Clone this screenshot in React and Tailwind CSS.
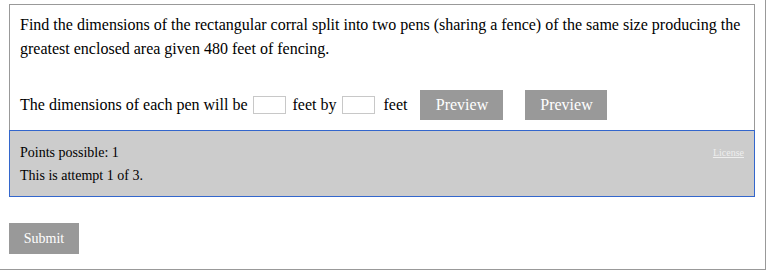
import React from "react";

const serif = { fontFamily: '"Liberation Serif", "Times New Roman", serif' };

const GrayButton = ({ children, className = "" }) => (
  <button
    className={`bg-[#999] text-white text-[16px] leading-none h-[30px] ${className}`}
  >
    {children}
  </button>
);

const AnswerBox = () => (
  <input
    type="text"
    className="w-[33px] h-[18px] border border-[#c8c8c8] bg-white outline-none"
  />
);

export default function App() {
  return (
    <div
      className="w-[766px] h-[270px] border-r border-b border-[#999] bg-white text-black"
      style={serif}
    >
      <div className="pt-[4px] pl-[9px] w-[755px]">
        {/* question */}
        <div className="border border-b-0 border-[#999] pt-[8px] pl-[10px] pr-[10px] pb-[10px]">
          <p className="text-[16px] leading-[24px]">
            Find the dimensions of the rectangular corral split into two pens
            (sharing a fence) of the same size producing the greatest enclosed
            area given 480 feet of fencing.
          </p>
          <div className="flex items-center mt-[29px] h-[30px] text-[16px]">
            <span>The dimensions of each pen will be</span>
            <span className="ml-[5px]">
              <AnswerBox />
            </span>
            <span className="ml-[7px]">feet by</span>
            <span className="ml-[6px]">
              <AnswerBox />
            </span>
            <span className="ml-[8px]">feet</span>
            <GrayButton className="ml-[13px] w-[83px]">Preview</GrayButton>
            <GrayButton className="ml-[22px] w-[82px]">Preview</GrayButton>
          </div>
        </div>

        {/* info */}
        <div className="border border-[#3366cc] bg-[#ccc] pt-[10px] pb-[9px] px-[10px] text-[14px] leading-[23px]">
          <div className="flex justify-between">
            <span>Points possible: 1</span>
            <a href="#" className="text-[10px] text-[#eeeeee] underline">
              License
            </a>
          </div>
          <div>This is attempt 1 of 3.</div>
        </div>
      </div>

      <div className="pl-[9px] mt-[26px]">
        <button className="bg-[#999] text-white text-[14px] w-[70px] h-[31px]">
          Submit
        </button>
      </div>
    </div>
  );
}
